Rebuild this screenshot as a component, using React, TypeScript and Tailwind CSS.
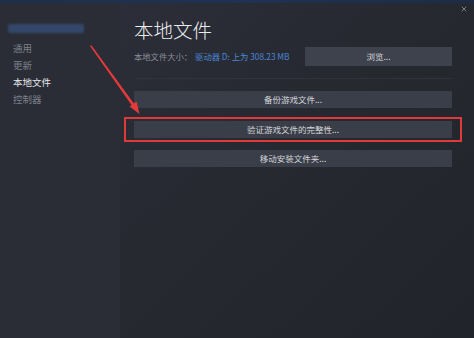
import { X } from 'lucide-react';

const navItems = [
  { label: '通用', active: false },
  { label: '更新', active: false },
  { label: '本地文件', active: true },
  { label: '控制器', active: false },
];

const ActionButton = ({ text }: { text: string }) => (
  <button className="flex h-[17px] w-full items-center justify-center bg-[#3a3e48] text-[8.5px] leading-none text-[#d4d6da]">
    {text}
  </button>
);

const App = () => {
  return (
    <div
      className="relative flex h-[338px] w-[474px] flex-col overflow-hidden bg-[#262830]"
      style={{ fontFamily: '"Noto Sans CJK SC", "Noto Sans", sans-serif' }}
    >
      <div className="h-[3px] w-full bg-gradient-to-r from-[#1e2f4a] via-[#203252] to-[#1c2c46]" />

      <div className="flex flex-1">
        {/* sidebar */}
        <div className="flex w-[120px] flex-col bg-[#2a2d35] pl-[8px] pt-[21px]">
          <div className="h-[9px] w-[76px] rounded-[2px] bg-[#34476a] blur-[1px]" />
          <div className="mt-[7px] flex flex-col pl-[5px]">
            {navItems.map((item) => (
              <div
                key={item.label}
                className={
                  'h-[17px] text-[9.5px] leading-[17px] ' +
                  (item.active ? 'text-[#e6e7ea]' : 'text-[#7b808a]')
                }
              >
                {item.label}
              </div>
            ))}
          </div>
        </div>

        {/* main */}
        <div className="relative flex flex-1 flex-col bg-gradient-to-br from-[#2b2e38] via-[#262830] to-[#22242b] pl-[14px] pr-[22px] pt-[15px]">
          <X className="absolute right-[6px] top-[2px] h-[8px] w-[8px] text-[#8d9198]" strokeWidth={2.5} />

          <h1 className="h-[24px] text-[19.5px] font-light leading-[24px] text-[#eceef0]">本地文件</h1>

          <div className="mt-[5px] flex h-[19px] items-center">
            <span className="text-[8.3px] text-[#8a8e96]">本地文件大小：</span>
            <span className="ml-[3px] text-[8.3px] text-[#4a86d4]">驱动器 D: 上为 308.23 MB</span>
            <button className="ml-auto flex h-[19px] w-[147px] items-center justify-center bg-[#3e424c] text-[8.5px] text-[#d4d6da]">
              浏览...
            </button>
          </div>

          <div className="mt-[12px] h-px w-full bg-[#30333c]" />

          <div className="mt-[12px]">
            <ActionButton text="备份游戏文件..." />
          </div>

          <div className="-mx-[10px] mt-[9px] border-2 border-[#e0393a] px-[8px] py-[2px]">
            <ActionButton text="验证游戏文件的完整性..." />
          </div>

          <div className="mt-[8px]">
            <ActionButton text="移动安装文件夹..." />
          </div>
        </div>
      </div>

      {/* annotation arrow */}
      <svg className="pointer-events-none absolute left-0 top-0" width="474" height="338" viewBox="0 0 474 338">
        <path d="M90 46 L91.4 45.2 L134.6 104.6 L132.4 106.2 Z" fill="#e5393a" />
        <polygon points="139.5,114 129.6,106.6 136.6,101.6" fill="#e5393a" />
      </svg>
    </div>
  );
};

export default App;
